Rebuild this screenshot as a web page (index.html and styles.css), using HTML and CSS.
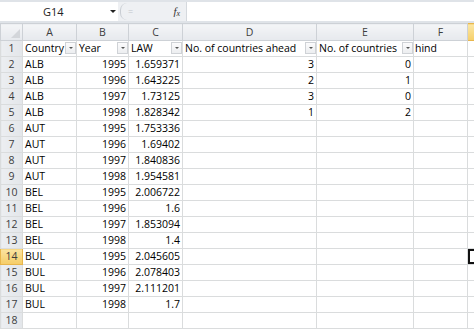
FILE: index.html
```html
<!DOCTYPE html>
<html>
<head>
<meta charset="utf-8">
<link rel="stylesheet" href="styles.css">
</head>
<body>
<div class="fbar">
  <div class="namebox"><span class="ref">G14</span><span class="nb-arrow"></span></div>
  <div class="fbtns"><span class="bracket"></span><span class="eq">=</span><span class="fx"><i>f</i><sub>x</sub></span></div>
  <div class="finput"></div>
</div>
<table class="sheet">
  <colgroup>
    <col class="c-rh"><col class="c-a"><col class="c-b"><col class="c-c"><col class="c-d"><col class="c-e"><col class="c-f"><col class="c-g">
  </colgroup>
  <thead>
    <tr class="hdr">
      <th class="corner"><span class="tri"></span></th><th>A</th><th>B</th><th>C</th><th>D</th><th>E</th><th>F</th><th class="hsel"></th>
    </tr>
  </thead>
  <tbody>
    <tr><th>1</th><td class="fl">Country<span class="fb"></span></td><td class="fl">Year<span class="fb"></span></td><td class="fl">LAW<span class="fb"></span></td><td class="fl">No. of countries ahead<span class="fb"></span></td><td class="fl">No. of countries<span class="fb"></span></td><td class="over">hind</td><td></td></tr>
    <tr><th>2</th><td>ALB</td><td class="n">1995</td><td class="n">1.659371</td><td class="n">3</td><td class="n">0</td><td></td><td></td></tr>
    <tr><th>3</th><td>ALB</td><td class="n">1996</td><td class="n">1.643225</td><td class="n">2</td><td class="n">1</td><td></td><td></td></tr>
    <tr><th>4</th><td>ALB</td><td class="n">1997</td><td class="n">1.73125</td><td class="n">3</td><td class="n">0</td><td></td><td></td></tr>
    <tr><th>5</th><td>ALB</td><td class="n">1998</td><td class="n">1.828342</td><td class="n">1</td><td class="n">2</td><td></td><td></td></tr>
    <tr><th>6</th><td>AUT</td><td class="n">1995</td><td class="n">1.753336</td><td></td><td></td><td></td><td></td></tr>
    <tr><th>7</th><td>AUT</td><td class="n">1996</td><td class="n">1.69402</td><td></td><td></td><td></td><td></td></tr>
    <tr><th>8</th><td>AUT</td><td class="n">1997</td><td class="n">1.840836</td><td></td><td></td><td></td><td></td></tr>
    <tr><th>9</th><td>AUT</td><td class="n">1998</td><td class="n">1.954581</td><td></td><td></td><td></td><td></td></tr>
    <tr><th>10</th><td>BEL</td><td class="n">1995</td><td class="n">2.006722</td><td></td><td></td><td></td><td></td></tr>
    <tr><th>11</th><td>BEL</td><td class="n">1996</td><td class="n">1.6</td><td></td><td></td><td></td><td></td></tr>
    <tr><th>12</th><td>BEL</td><td class="n">1997</td><td class="n">1.853094</td><td></td><td></td><td></td><td></td></tr>
    <tr><th>13</th><td>BEL</td><td class="n">1998</td><td class="n">1.4</td><td></td><td></td><td></td><td></td></tr>
    <tr class="rsel"><th>14</th><td>BUL</td><td class="n">1995</td><td class="n">2.045605</td><td></td><td></td><td></td><td class="active"><span class="selbox"></span></td></tr>
    <tr><th>15</th><td>BUL</td><td class="n">1996</td><td class="n">2.078403</td><td></td><td></td><td></td><td></td></tr>
    <tr><th>16</th><td>BUL</td><td class="n">1997</td><td class="n">2.111201</td><td></td><td></td><td></td><td></td></tr>
    <tr><th>17</th><td>BUL</td><td class="n">1998</td><td class="n">1.7</td><td></td><td></td><td></td><td></td></tr>
    <tr><th>18</th><td></td><td></td><td></td><td></td><td></td><td></td><td></td></tr>
  </tbody>
</table>
</body>
</html>
```
FILE: styles.css
```css
html, body {
  margin: 0;
  padding: 0;
  background: #fff;
  overflow: hidden;
  width: 474px;
  height: 329px;
  font-family: "Open Sans", "Liberation Sans", sans-serif;
  font-size: 10.5px;
  color: #000;
}

.fbar {
  display: flex;
  height: 19px;
  border-top: 2px solid #dfe3e8;
  border-bottom: 2px solid #dfe3e8;
  background: #fff;
}

.namebox {
  width: 118px;
  display: flex;
  align-items: center;
  position: relative;
}
.ref {
  margin-left: 43px;
  font-size: 11px;
  color: #222;
}
.nb-arrow {
  position: absolute;
  left: 110px;
  top: 8px;
  border-left: 3px solid transparent;
  border-right: 3px solid transparent;
  border-top: 3px solid #222;
}

.fbtns {
  width: 68px;
  background: #eef0f3;
  display: flex;
  align-items: center;
  position: relative;
  border-right: 1px solid #d5d9de;
}
.bracket {
  width: 6px;
  height: 17px;
  border-left: 1.5px solid #c9cdd3;
  border-radius: 8px 0 0 8px;
  margin-left: 2px;
}
.eq {
  color: #c2c6cc;
  font-size: 9px;
  margin-left: 1px;
}
.fx {
  margin-left: auto;
  margin-right: 6px;
  font-family: "Liberation Serif", serif;
  font-size: 11px;
  color: #333;
}
.fx sub {
  font-size: 8px;
  font-style: italic;
  vertical-align: -1px;
}
.finput {
  flex: 1;
  background: #fff;
}

.sheet {
  border-collapse: collapse;
  table-layout: fixed;
  width: 474px;
}
.c-rh { width: 22px; }
.c-a { width: 54px; }
.c-b { width: 52px; }
.c-c { width: 54px; }
.c-d { width: 134px; }
.c-e { width: 97px; }
.c-f { width: 54px; }
.c-g { width: 7px; }

.sheet th, .sheet td {
  height: 15px;
  padding: 0;
  border: 1px solid #dadcdd;
  white-space: nowrap;
  overflow: hidden;
  line-height: 15px;
}
.hdr th {
  height: 16px;
  background: linear-gradient(#f4f5f7, #e6e9ed);
  border-color: #cdd1d6;
  font-weight: normal;
  color: #3d3d3d;
  text-align: center;
}
.hdr th.hsel {
  background: linear-gradient(#fbe7a5, #f6cf6a);
  border-color: #e8b64c;
  border-right: none;
}
.corner {
  position: relative;
}
.tri {
  position: absolute;
  right: 2px;
  bottom: 2px;
  border-left: 9px solid transparent;
  border-bottom: 9px solid #d3d6da;
}
tbody th {
  background: linear-gradient(90deg, #eceef1, #e3e6ea);
  border-color: #cdd1d6;
  font-weight: normal;
  color: #3d3d3d;
  text-align: center;
}
tbody tr.rsel th {
  background: linear-gradient(#fbe3a0, #f5cd67);
  border-color: #e8b64c;
}
td {
  padding-left: 2px !important;
  padding-right: 2px !important;
  text-align: left;
}
td.n {
  text-align: right;
}
td.fl {
  position: relative;
}
td.over {
  padding-left: 1px !important;
}
.fb {
  position: absolute;
  right: 0;
  top: 1px;
  width: 11px;
  height: 12px;
  box-sizing: border-box;
  border: 1px solid #cfd2d6;
  background: linear-gradient(#fbfbfc, #eceef0);
}
.fb::after {
  content: "";
  position: absolute;
  left: 3px;
  top: 4px;
  border-left: 2px solid transparent;
  border-right: 2px solid transparent;
  border-top: 2px solid #555;
}
td.active {
  position: relative;
}
.selbox {
  position: absolute;
  left: 0;
  top: 0;
  right: 0;
  bottom: 0;
  border: 2px solid #111;
  border-right: none;
}
```
